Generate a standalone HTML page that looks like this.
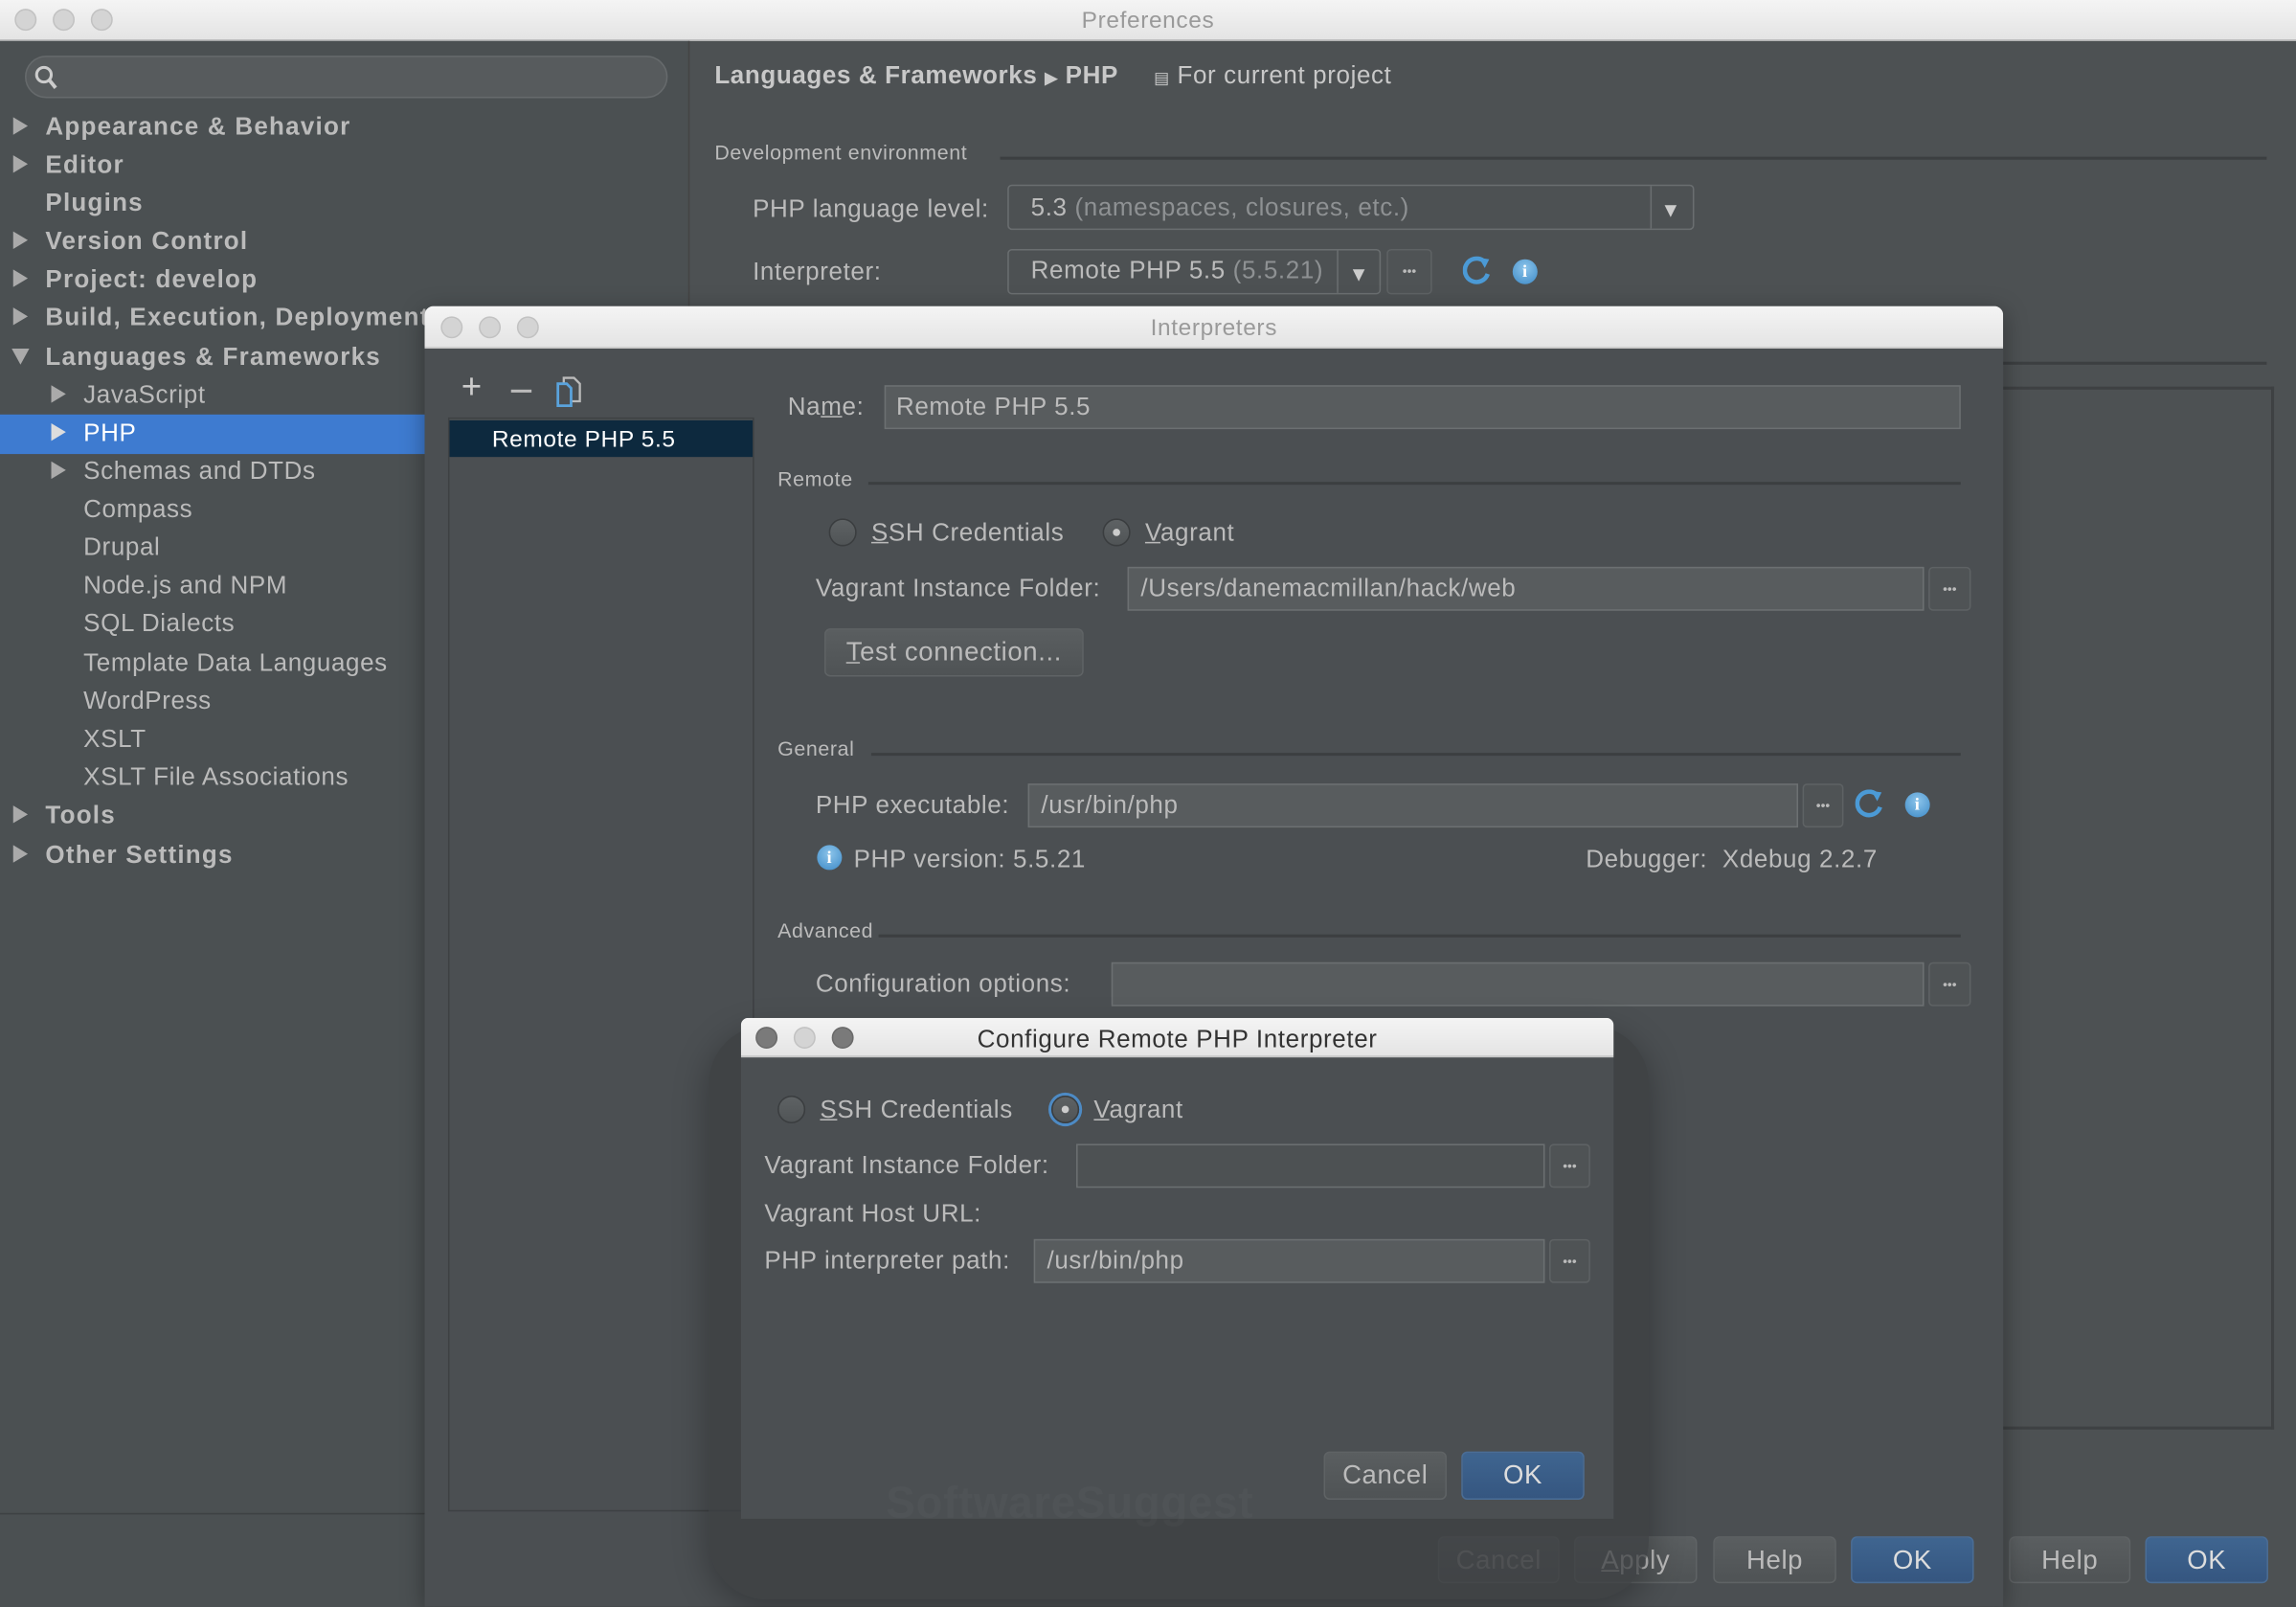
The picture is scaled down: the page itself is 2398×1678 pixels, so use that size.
<!DOCTYPE html>
<html><head><meta charset="utf-8"><style>
*{margin:0;padding:0;box-sizing:border-box}
html,body{width:2398px;height:1678px;overflow:hidden;background:#4d5153}
#w{position:absolute;left:0;top:0;width:1568px;height:1097px;transform:scale(1.52934);transform-origin:0 0;font-family:"Liberation Sans",sans-serif;color:#bbbbbb;font-size:17px;background:#4d5153;letter-spacing:0.4px}
.a{position:absolute;white-space:nowrap}
.t{position:absolute;white-space:nowrap;line-height:20px;margin-top:1px}
.sb{font-weight:bold;letter-spacing:0.8px}
.tb{background:linear-gradient(#f4f4f4,#e4e4e4);border-bottom:1px solid #c8c8c8}
.dot{position:absolute;width:15px;height:15px;border-radius:50%;background:#d4d4d4;border:1px solid #c2c2c2}
.fld{position:absolute;background:#585c5e;border:1px solid #6c7072}
.btn{position:absolute;border:1px solid #5e6264;border-radius:3px;background:#4f5355;color:#bbb;text-align:center;font-size:9px;line-height:26px;letter-spacing:0}
.pb{position:absolute;border:1px solid #5f6365;border-radius:4px;background:linear-gradient(#5a5e60,#4f5355);text-align:center;font-size:18px}
.ok{background:linear-gradient(#3f6590,#355680);border-color:#4a6d96;color:#ddd}
.line{position:absolute;height:2px;background:#3c3f41}
.arr{position:absolute;width:0;height:0;border-top:6px solid transparent;border-bottom:6px solid transparent;border-left:10px solid #aaa}
.rad{position:absolute;width:19px;height:19px;border-radius:50%;background:linear-gradient(#5e6264,#505456);border:1px solid #3a3d3f}
.rad.on::after{content:"";position:absolute;left:6px;top:6px;width:5px;height:5px;border-radius:50%;background:#ccc}
.info{position:absolute;width:17px;height:17px;border-radius:50%;background:radial-gradient(circle at 50% 35%,#8cc4ea,#3d8ac7);color:#fff;font:bold 12px "Liberation Serif",serif;text-align:center;line-height:17px}
u{text-decoration:underline}
</style></head><body><div id="w">

<div class="a tb" style="left:0;top:0;width:1568px;height:28px"></div>
<div class="dot" style="left:10px;top:6px"></div><div class="dot" style="left:36px;top:6px"></div><div class="dot" style="left:62px;top:6px"></div>
<div class="t" style="left:0;width:1568px;text-align:center;top:4px;color:#9a9a9a;font-size:16px">Preferences</div>

<div class="a" style="left:0;top:28px;width:471px;height:1069px;background:#4b5052;border-right:1px solid #444"></div>
<div class="a" style="left:17px;top:38px;width:439px;height:29px;border-radius:15px;background:#575b5d;border:1px solid #666a6c"></div>
<svg class="a" style="left:23px;top:44px" width="18" height="18"><circle cx="7" cy="7" r="5" fill="none" stroke="#ccc" stroke-width="2"/><line x1="10.5" y1="10.5" x2="15" y2="16" stroke="#ccc" stroke-width="2.5"/></svg>
<div class="a" style="left:0;top:283px;width:290px;height:27px;background:#3e7bd0"></div>

<div class="arr" style="left:9px;top:80px"></div><div class="t sb" style="left:31px;top:76px">Appearance &amp; Behavior</div>
<div class="arr" style="left:9px;top:106px"></div><div class="t sb" style="left:31px;top:102px">Editor</div>
<div class="t sb" style="left:31px;top:128px">Plugins</div>
<div class="arr" style="left:9px;top:158px"></div><div class="t sb" style="left:31px;top:154px">Version Control</div>
<div class="arr" style="left:9px;top:184px"></div><div class="t sb" style="left:31px;top:180px">Project: develop</div>
<div class="arr" style="left:9px;top:210px"></div><div class="t sb" style="left:31px;top:206px">Build, Execution, Deployment</div>
<div class="a" style="left:8px;top:238px;border-left:6px solid transparent;border-right:6px solid transparent;border-top:11px solid #aaa"></div><div class="t sb" style="left:31px;top:233px">Languages &amp; Frameworks</div>
<div class="arr" style="left:35px;top:263px"></div><div class="t" style="left:57px;top:259px">JavaScript</div>
<div class="arr" style="left:35px;top:289px;border-left-color:#ddd"></div><div class="t" style="left:57px;top:285px;color:#fff">PHP</div>
<div class="arr" style="left:35px;top:315px"></div><div class="t" style="left:57px;top:311px">Schemas and DTDs</div>
<div class="t" style="left:57px;top:337px">Compass</div>
<div class="t" style="left:57px;top:363px">Drupal</div>
<div class="t" style="left:57px;top:389px">Node.js and NPM</div>
<div class="t" style="left:57px;top:415px">SQL Dialects</div>
<div class="t" style="left:57px;top:442px">Template Data Languages</div>
<div class="t" style="left:57px;top:468px">WordPress</div>
<div class="t" style="left:57px;top:494px">XSLT</div>
<div class="t" style="left:57px;top:520px">XSLT File Associations</div>
<div class="arr" style="left:9px;top:550px"></div><div class="t sb" style="left:31px;top:546px">Tools</div>
<div class="arr" style="left:9px;top:577px"></div><div class="t sb" style="left:31px;top:573px">Other Settings</div>
<div class="a" style="left:0;top:1033px;width:290px;height:1px;background:#3e4143"></div>

<div class="t" style="left:488px;top:41px;font-weight:bold;color:#c8c8c8">Languages &amp; Frameworks <span style="font-size:11px">▶</span> PHP</div>
<div class="t" style="left:788px;top:41px;color:#c8c8c8"><span style="font-size:11px">▤</span> For current project</div>
<div class="t" style="left:488px;top:93px;font-size:14px">Development environment</div>
<div class="line" style="left:683px;top:107px;width:865px"></div>
<div class="t" style="left:514px;top:132px">PHP language level:</div>
<div class="a" style="left:688px;top:126px;width:469px;height:31px;border:1px solid #6a6e70;border-radius:3px;background:#4d5153"></div>
<div class="a" style="left:1127px;top:127px;width:1px;height:29px;background:#6a6e70"></div>
<div class="t" style="left:704px;top:131px">5.3 <span style="color:#8e9193">(namespaces, closures, etc.)</span></div>
<div class="t" style="left:1134px;top:132px;font-size:14px;color:#ccc">▼</div>
<div class="t" style="left:514px;top:175px">Interpreter:</div>
<div class="a" style="left:688px;top:170px;width:255px;height:31px;border:1px solid #6a6e70;border-radius:3px"></div>
<div class="a" style="left:913px;top:171px;width:1px;height:29px;background:#6a6e70"></div>
<div class="t" style="left:704px;top:174px">Remote PHP 5.5 <span style="color:#8e9193">(5.5.21)</span></div>
<div class="t" style="left:921px;top:176px;font-size:14px;color:#ccc">▼</div>
<div class="btn" style="left:947px;top:170px;width:31px;height:31px;line-height:29px">•••</div>
<svg class="a" style="left:999px;top:175px" width="20" height="22"><path d="M14 3 A8 8 0 1 0 17 12" fill="none" stroke="#4b9ad6" stroke-width="3"/><path d="M11 1 L18 2 L15 8 Z" fill="#4b9ad6"/></svg>
<div class="info" style="left:1033px;top:177px">i</div>
<div class="line" style="left:1360px;top:247px;width:188px"></div>
<div class="a" style="left:1360px;top:264px;width:193px;height:712px;border:2px solid #3e4143;border-left:none"></div>
<div class="pb" style="left:1372px;top:1049px;width:83px;height:32px;line-height:30px">Help</div>
<div class="pb ok" style="left:1465px;top:1049px;width:84px;height:32px;line-height:30px">OK</div>

<div class="a" style="left:290px;top:209px;width:1078px;height:888px;border-radius:6px;box-shadow:0 4px 16px rgba(0,0,0,.35)"></div>
<div class="a" style="left:290px;top:209px;width:1078px;height:888px;background:#4b4f52;border-radius:6px 6px 0 0;overflow:hidden">
 <div class="a tb" style="left:0;top:0;width:1078px;height:29px"></div>
</div>
<div class="dot" style="left:301px;top:216px"></div><div class="dot" style="left:327px;top:216px"></div><div class="dot" style="left:353px;top:216px"></div>
<div class="t" style="left:290px;width:1078px;text-align:center;top:214px;color:#9a9a9a;font-size:16px">Interpreters</div>
<div class="t" style="left:315px;top:254px;font-size:24px;color:#ccc">+</div>
<div class="a" style="left:349px;top:266px;width:14px;height:2px;background:#bbb"></div>
<svg class="a" style="left:379px;top:256px" width="22" height="22"><path d="M6 2 H13 L17 6 V18 H6 Z" fill="none" stroke="#bbb" stroke-width="1.5"/><path d="M2 6 H8 L11 9 V21 H2 Z" fill="#4b4f52" stroke="#5aa3dc" stroke-width="1.8"/></svg>
<div class="a" style="left:306px;top:285px;width:209px;height:747px;border:1px solid #3e4143;background:#4b4f52"></div>
<div class="a" style="left:307px;top:287px;width:207px;height:25px;background:#0d293e"></div>
<div class="t" style="left:336px;top:290px;color:#fff;font-size:16px">Remote PHP 5.5</div>

<div class="t" style="left:538px;top:267px">Na<u>m</u>e:</div>
<div class="fld" style="left:604px;top:263px;width:735px;height:30px"></div>
<div class="t" style="left:612px;top:267px">Remote PHP 5.5</div>
<div class="t" style="left:531px;top:316px;font-size:14px">Remote</div>
<div class="line" style="left:593px;top:329px;width:746px"></div>
<div class="rad" style="left:566px;top:354px"></div><div class="t" style="left:595px;top:353px"><u>S</u>SH Credentials</div>
<div class="rad on" style="left:753px;top:354px"></div><div class="t" style="left:782px;top:353px"><u>V</u>agrant</div>
<div class="t" style="left:557px;top:391px">Vagrant Instance Folder:</div>
<div class="fld" style="left:770px;top:387px;width:544px;height:30px"></div>
<div class="t" style="left:779px;top:391px">/Users/danemacmillan/hack/web</div>
<div class="btn" style="left:1317px;top:387px;width:29px;height:30px;line-height:28px">•••</div>
<div class="pb" style="left:563px;top:429px;width:177px;height:33px;line-height:31px"><u>T</u>est connection...</div>
<div class="t" style="left:531px;top:500px;font-size:14px">General</div>
<div class="line" style="left:595px;top:514px;width:744px"></div>
<div class="t" style="left:557px;top:539px">PHP executable:</div>
<div class="fld" style="left:702px;top:535px;width:526px;height:30px"></div>
<div class="t" style="left:711px;top:539px">/usr/bin/php</div>
<div class="btn" style="left:1231px;top:535px;width:28px;height:30px;line-height:28px">•••</div>
<svg class="a" style="left:1267px;top:539px" width="20" height="22"><path d="M14 3 A8 8 0 1 0 17 12" fill="none" stroke="#4b9ad6" stroke-width="3"/><path d="M11 1 L18 2 L15 8 Z" fill="#4b9ad6"/></svg>
<div class="info" style="left:1301px;top:541px">i</div>
<div class="info" style="left:558px;top:577px">i</div>
<div class="t" style="left:583px;top:576px">PHP version: 5.5.21</div>
<div class="t" style="left:1083px;top:576px">Debugger:&nbsp; Xdebug 2.2.7</div>
<div class="t" style="left:531px;top:624px;font-size:14px">Advanced</div>
<div class="line" style="left:600px;top:638px;width:739px"></div>
<div class="t" style="left:557px;top:661px">Configuration options:</div>
<div class="fld" style="left:759px;top:657px;width:555px;height:30px"></div>
<div class="btn" style="left:1317px;top:657px;width:29px;height:30px;line-height:28px">•••</div>

<div class="pb" style="left:982px;top:1049px;width:83px;height:32px;line-height:30px;color:#888">Cancel</div>
<div class="pb" style="left:1075px;top:1049px;width:84px;height:32px;line-height:30px"><u>A</u>pply</div>
<div class="pb" style="left:1170px;top:1049px;width:84px;height:32px;line-height:30px">Help</div>
<div class="pb ok" style="left:1264px;top:1049px;width:84px;height:32px;line-height:30px">OK</div>

<div class="a" style="left:484px;top:700px;width:642px;height:392px;border-radius:40px;background:rgba(60,63,65,.75);box-shadow:0 6px 24px rgba(0,0,0,.3)"></div>
<div class="a" style="left:506px;top:695px;width:596px;height:342px;background:#4b4f52;border-radius:5px 5px 0 0;overflow:hidden">
 <div class="a tb" style="left:0;top:0;width:596px;height:27px"></div>
</div>
<div class="dot" style="left:516px;top:701px;background:#7a7a7a;border-color:#6a6a6a"></div>
<div class="dot" style="left:542px;top:701px"></div>
<div class="dot" style="left:568px;top:701px;background:#7a7a7a;border-color:#6a6a6a"></div>
<div class="t" style="left:506px;width:596px;text-align:center;top:699px;color:#333;font-size:17px">Configure Remote PHP Interpreter</div>
<div class="rad" style="left:531px;top:748px"></div><div class="t" style="left:560px;top:747px"><u>S</u>SH Credentials</div>
<div class="rad on" style="left:718px;top:748px;box-shadow:0 0 0 2px #4d8ac4"></div><div class="t" style="left:747px;top:747px"><u>V</u>agrant</div>
<div class="t" style="left:522px;top:785px">Vagrant Instance Folder:</div>
<div class="fld" style="left:735px;top:781px;width:320px;height:30px;background:#4d5153"></div>
<div class="btn" style="left:1058px;top:781px;width:28px;height:30px;line-height:28px">•••</div>
<div class="t" style="left:522px;top:818px">Vagrant Host URL:</div>
<div class="t" style="left:522px;top:850px">PHP interpreter path:</div>
<div class="fld" style="left:706px;top:846px;width:349px;height:30px"></div>
<div class="t" style="left:715px;top:850px">/usr/bin/php</div>
<div class="btn" style="left:1058px;top:846px;width:28px;height:30px;line-height:28px">•••</div>
<div class="pb" style="left:904px;top:991px;width:84px;height:33px;line-height:31px">Cancel</div>
<div class="pb ok" style="left:998px;top:991px;width:84px;height:33px;line-height:31px">OK</div>
<div class="t" style="left:605px;top:1016px;font-size:30px;font-weight:bold;color:rgba(255,255,255,.025)">SoftwareSuggest</div>

</div></body></html>
